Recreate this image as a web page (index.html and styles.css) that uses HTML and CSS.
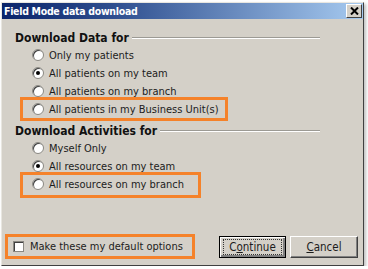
FILE: index.html
```html
<!DOCTYPE html>
<html>
<head>
<meta charset="utf-8">
<link rel="stylesheet" href="styles.css">
</head>
<body>
<div class="dialog">
  <div class="titlebar">
    <span class="title">Field Mode data download</span>
    <span class="close"><svg width="9" height="8" viewBox="0 0 9 8"><path d="M1 0.5 L8 7.5 M8 0.5 L1 7.5" stroke="#000" stroke-width="2" fill="none"/></svg></span>
  </div>
  <div class="content">
    <div class="group-head"><span class="gh-text">Download Data for</span><span class="gh-line"></span></div>
    <div class="opt"><span class="radio"></span><span>Only my patients</span></div>
    <div class="opt"><span class="radio checked"></span><span>All patients on my team</span></div>
    <div class="opt"><span class="radio"></span><span>All patients on my branch</span></div>
    <div class="hl hl-one"><div class="opt"><span class="radio"></span><span>All patients in my Business Unit(s)</span></div></div>
    <div class="group-head second"><span class="gh-text">Download Activities for</span><span class="gh-line"></span></div>
    <div class="opt"><span class="radio"></span><span>Myself Only</span></div>
    <div class="opt"><span class="radio checked"></span><span>All resources on my team</span></div>
    <div class="hl hl-two"><div class="opt"><span class="radio"></span><span>All resources on my branch</span></div></div>
  </div>
  <div class="footer">
    <div class="hl hl-three"><span class="check"></span><span>Make these my default options</span></div>
    <div class="buttons">
      <span class="btn default"><span class="focus">C<u>o</u>ntinue</span></span>
      <span class="btn"><span class="label"><u>C</u>ancel</span></span>
    </div>
  </div>
</div>
</body>
</html>
```
FILE: styles.css
```css
html, body {
  margin: 0;
  padding: 0;
  background: #ffffff;
}
body {
  font-family: "DejaVu Sans Condensed", "DejaVu Sans", sans-serif;
  font-size: 11px;
  color: #1c1c1c;
}
.dialog {
  margin: 2px 0 0 1px;
  width: 363px;
  height: 264px;
  box-sizing: border-box;
  background: #d4d0c8;
  border: 1px solid;
  border-color: #e8e6e0 #404040 #404040 #e8e6e0;
  box-shadow: 2px 2px 3px rgba(0,0,0,0.25);
  display: flex;
  flex-direction: column;
}
.titlebar {
  height: 16px;
  background: linear-gradient(to right, #0a246a 0%, #2d4d8e 30%, #a6caf0 100%);
  display: flex;
  align-items: center;
  justify-content: space-between;
  padding: 0 1px 0 2px;
}
.title {
  color: #ffffff;
  font-weight: bold;
  font-size: 10.5px;
  letter-spacing: -0.3px;
}
.close {
  width: 14px;
  height: 12px;
  background: #d4d0c8;
  border: 1px solid;
  border-color: #ffffff #404040 #404040 #ffffff;
  display: flex;
  align-items: center;
  justify-content: center;
}
.content {
  padding-left: 13px;
  display: flex;
  flex-direction: column;
}
.group-head {
  margin-top: 11px;
  height: 16px;
  display: flex;
  align-items: center;
  width: 305px;
}
.group-head.second {
  margin-top: 2px;
}
.gh-text {
  font-weight: bold;
  font-size: 12px;
  color: #111;
  white-space: nowrap;
}
.gh-line {
  flex: 1;
  margin-left: 3px;
  height: 0;
  border-top: 1px solid #9c9a94;
  border-bottom: 1px solid #ffffff;
}
.opt {
  height: 18px;
  display: flex;
  align-items: center;
  padding-left: 17px;
  white-space: nowrap;
}
.radio {
  width: 10px;
  height: 10px;
  border-radius: 50%;
  background: #ffffff;
  border: 1px solid #8a8882;
  box-shadow: inset 1px 1px 0 #404040;
  margin-right: 5px;
  position: relative;
  flex: none;
}
.radio.checked::after {
  content: "";
  position: absolute;
  left: 3px;
  top: 3px;
  width: 4px;
  height: 4px;
  border-radius: 50%;
  background: #000;
}
.hl {
  border: 3px solid #f5822a;
  box-sizing: border-box;
}
.hl .opt {
  padding-left: 9px;
}
.hl-one {
  margin: -3px 0 0 5px;
  width: 208px;
  height: 24px;
}
.hl-two {
  margin: -3px 0 0 5px;
  width: 181px;
  height: 26px;
}
.footer {
  margin-top: auto;
  padding: 0 5px 6px 3px;
  display: flex;
  align-items: center;
  justify-content: space-between;
}
.hl-three {
  width: 190px;
  height: 25px;
  display: flex;
  align-items: center;
  padding-left: 5px;
  white-space: nowrap;
}
.check {
  width: 9px;
  height: 9px;
  background: #ffffff;
  border: 1px solid #8a8882;
  box-shadow: inset 1px 1px 0 #404040;
  margin-right: 6px;
  flex: none;
}
.buttons {
  display: flex;
  gap: 4px;
  align-items: center;
}
.btn {
  width: 68px;
  height: 22px;
  box-sizing: border-box;
  background: #d4d0c8;
  border: 1px solid;
  border-color: #ffffff #404040 #404040 #ffffff;
  box-shadow: inset -1px -1px 0 #808080;
  display: flex;
  align-items: center;
  justify-content: center;
  font-size: 11.5px;
}
.btn.default {
  width: 67px;
  border: 1px solid #000;
  box-shadow: inset 1px 1px 0 #ffffff, inset -2px -2px 0 #808080;
}
.focus {
  border: 1px dotted #333;
  padding: 0 5px;
  line-height: 14px;
}
.label {
  line-height: 14px;
}
u {
  text-decoration: underline;
  text-underline-offset: 1px;
}
```
